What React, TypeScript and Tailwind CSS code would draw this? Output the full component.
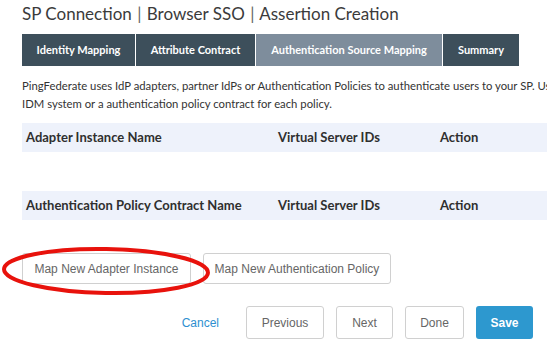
export default function App() {
  return (
    <div className="relative h-[348px] w-[547px] overflow-hidden bg-white font-['Lato','Liberation_Sans',sans-serif] text-[#333]">
      <div className="pl-[22px]">
        {/* Title */}
        <h1 className="mt-[2px] h-[24px] whitespace-nowrap text-[17px] leading-[24px] text-[#3b3b3b]">
          SP Connection <span className="mx-[1px] text-[#666]">|</span> Browser SSO{" "}
          <span className="mx-[1px] text-[#666]">|</span> Assertion Creation
        </h1>

        {/* Tabs */}
        <div className="mt-[8px] flex h-[32px] gap-[1px] text-[11px] font-bold text-white">
          <div className="flex w-[113px] items-center justify-center bg-[#3d4f5b]">Identity Mapping</div>
          <div className="flex w-[119px] items-center justify-center bg-[#3d4f5b]">Attribute Contract</div>
          <div className="flex w-[186px] items-center justify-center bg-[#7e8d9c]">Authentication Source Mapping</div>
          <div className="flex w-[76px] items-center justify-center bg-[#3d4f5b]">Summary</div>
        </div>

        {/* Description */}
        <div className="mt-[11px] w-[525px] overflow-hidden text-[11.3px] leading-[18px] text-[#333]">
          <div className="whitespace-nowrap">
            PingFederate uses IdP adapters, partner IdPs or Authentication Policies to authenticate users to your SP. Use
          </div>
          <div className="whitespace-nowrap">IDM system or a authentication policy contract for each policy.</div>
        </div>

        {/* Tables */}
        <div className="mt-[10px] flex h-[29px] w-[700px] items-center bg-[#eef2fb] pl-[4px] text-[13px] font-bold text-[#2f2f2f]">
          <div className="w-[252px]">Adapter Instance Name</div>
          <div className="w-[162px]">Virtual Server IDs</div>
          <div>Action</div>
        </div>

        <div className="mt-[39px] flex h-[29px] w-[700px] items-center bg-[#eef2fb] pl-[4px] text-[13px] font-bold text-[#2f2f2f]">
          <div className="w-[252px]">Authentication Policy Contract Name</div>
          <div className="w-[162px]">Virtual Server IDs</div>
          <div>Action</div>
        </div>

        {/* Map buttons */}
        <div className="mt-[33px] flex gap-[12px] font-['Liberation_Sans',sans-serif] text-[12px] text-[#666]">
          <button className="h-[31px] w-[169px] rounded-[3px] border border-[#d0d0d0] bg-white">
            Map New Adapter Instance
          </button>
          <button className="h-[31px] w-[188px] rounded-[3px] border border-[#d0d0d0] bg-white">
            Map New Authentication Policy
          </button>
        </div>
      </div>

      {/* Footer buttons */}
      <div className="mt-[22px] flex items-center justify-end gap-[12px] pr-[14px] font-['Liberation_Sans',sans-serif] text-[12px]">
        <button className="mr-[15px] text-[#2e8fd0]">Cancel</button>
        <button className="h-[33px] w-[78px] rounded-[3px] border border-[#d0d0d0] bg-white text-[#666]">Previous</button>
        <button className="h-[33px] w-[57px] rounded-[3px] border border-[#d0d0d0] bg-white text-[#666]">Next</button>
        <button className="h-[33px] w-[59px] rounded-[3px] border border-[#d0d0d0] bg-white text-[#666]">Done</button>
        <button className="h-[33px] w-[57px] rounded-[3px] bg-[#2d98cf] font-bold text-white">Save</button>
      </div>

      {/* Red annotation ellipse */}
      <svg className="pointer-events-none absolute left-0 top-[244px]" width="215" height="54" viewBox="0 0 215 54">
        <ellipse cx="106" cy="27" rx="102" ry="22" fill="none" stroke="#e8120c" strokeWidth="4" transform="rotate(1 106 27)" />
      </svg>
    </div>
  );
}
